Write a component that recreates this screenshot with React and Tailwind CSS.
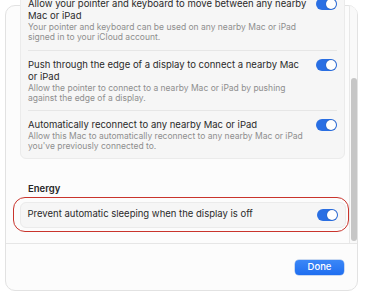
function Toggle() {
  return (
    <div className="w-[21px] h-[12px] rounded-full bg-[#2a6fe3] flex items-center justify-end pr-[1px] shrink-0">
      <div className="w-[10px] h-[10px] rounded-full bg-white shadow-[0_0_1px_rgba(0,0,0,0.4)]" />
    </div>
  );
}

function SettingRow({ title, desc, pt, pb, border }) {
  return (
    <div className={"flex items-start justify-between gap-2 " + pt + " " + pb + (border ? " border-b border-[#e6e6e6]" : "")}>
      <div className="w-[280px]">
        {title.map((line, i) => (
          <div key={i} className="whitespace-nowrap text-[9.5px] leading-[12px] text-[#2a2a2a]">{line}</div>
        ))}
        {desc.map((line, i) => (
          <div key={i} className="whitespace-nowrap text-[8.5px] leading-[10px] text-[#8e8e8e]">{line}</div>
        ))}
      </div>
      <Toggle />
    </div>
  );
}

const rows = [
  {
    title: ["Allow your pointer and keyboard to move between any nearby", "Mac or iPad"],
    desc: ["Your pointer and keyboard can be used on any nearby Mac or iPad", "signed in to your iCloud account."],
    pt: "pt-[8px]",
    pb: "pb-[8px]",
  },
  {
    title: ["Push through the edge of a display to connect a nearby Mac", "or iPad"],
    desc: ["Allow the pointer to connect to a nearby Mac or iPad by pushing", "against the edge of a display."],
    pt: "pt-[8px]",
    pb: "pb-[7px]",
  },
  {
    title: ["Automatically reconnect to any nearby Mac or iPad"],
    desc: ["Allow this Mac to automatically reconnect to any nearby Mac or iPad", "you've previously connected to."],
    pt: "pt-[8px]",
    pb: "pb-[7px]",
  },
];

export default function App() {
  return (
    <div className="w-[365px] h-[296px] bg-white overflow-hidden pt-[5px] pl-[5px] font-['Inter','Noto_Sans',sans-serif]">
      <div className="w-[353px] h-[286px] rounded-[10px] border border-[#e2e2e2] bg-[#fcfcfc] flex flex-col">
        {/* scroll area */}
        <div className="h-[237px] flex [clip-path:inset(-20px_0_0_0)]">
          <div className="flex-1 pl-[14px] pr-[4px] mt-[-17px]">
            <div className="rounded-[6px] bg-[#f6f6f6] border border-[#ebebeb] px-[7px]">
              {rows.map((r, i) => (
                <SettingRow key={i} {...r} border={i < rows.length - 1} />
              ))}
            </div>

            <div className="mt-[23px] pl-[8px] text-[9.5px] leading-[13px] font-semibold text-[#262626]">Energy</div>

            <div className="mt-[2px] ml-[-7px] mr-[-4px] border-[1.5px] border-[#c9342c] rounded-[12px] pl-[5.5px] pr-[2.5px] py-[3.5px]">
              <div className="rounded-[6px] bg-[#f6f6f6] border border-[#ebebeb] px-[7px] h-[26px] flex items-center justify-between">
                <div className="text-[9.5px] text-[#2a2a2a]">Prevent automatic sleeping when the display is off</div>
                <Toggle />
              </div>
            </div>
          </div>

          {/* scrollbar */}
          <div className="w-[10px] border-l border-[#e8e8e8] bg-[#f9f9f9] rounded-tr-[10px] pt-[72px] pb-[2px] flex justify-center">
            <div className="w-[6px] h-full rounded-full bg-[#c6c6c6]" />
          </div>
        </div>

        {/* footer */}
        <div className="flex-1 border-t border-[#e6e6e6] flex items-center justify-end pr-[13px]">
          <button className="w-[49px] h-[15px] rounded-[4px] bg-gradient-to-b from-[#3b87f7] to-[#1f6ef0] text-white text-[9.5px] font-medium leading-none shadow-[0_0_0_0.5px_rgba(0,80,200,0.4)]">
            Done
          </button>
        </div>
      </div>
    </div>
  );
}
